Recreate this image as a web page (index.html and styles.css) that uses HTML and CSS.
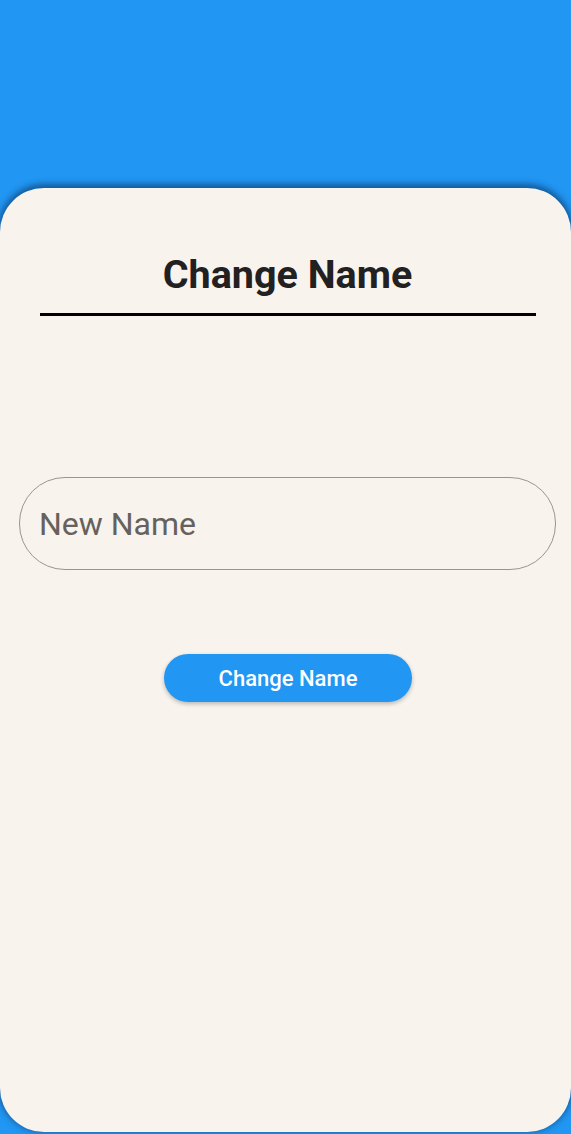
FILE: index.html
```html
<!DOCTYPE html>
<html lang="en">
<head>
<meta charset="utf-8">
<title>Change Name</title>
<link rel="stylesheet" href="styles.css">
</head>
<body>
<div class="screen">
  <main class="card">
    <h1 class="title">Change Name</h1>
    <div class="rule"></div>
    <input class="name-input" type="text" placeholder="New Name">
    <button class="submit" type="button">Change Name</button>
  </main>
</div>
</body>
</html>
```
FILE: styles.css
```css
html, body {
  margin: 0;
  padding: 0;
}
body {
  background: #2196f3;
  font-family: Roboto, "Noto Sans", "Liberation Sans", sans-serif;
  width: 571px;
  height: 1134px;
  overflow: hidden;
}
.screen {
  padding-top: 188px;
  height: 1134px;
  box-sizing: border-box;
}
.card {
  height: 944px;
  background: #f8f3ed;
  border-radius: 44px;
  box-shadow: 0 -2px 6px 2px rgba(10, 40, 80, 0.55);
  display: flex;
  flex-direction: column;
  padding-top: 64px;
  box-sizing: border-box;
}
.title {
  margin: 0;
  font-size: 39.5px;
  line-height: 46px;
  font-weight: 700;
  color: #222020;
  text-align: center;
  padding-left: 4px;
}
.rule {
  margin: 15px 0 0 40px;
  width: 496px;
  height: 3px;
  background: #000;
}
.name-input {
  margin: 161px 0 0 19px;
  width: 537px;
  height: 93px;
  box-sizing: border-box;
  border: 1.5px solid #9c958f;
  border-radius: 46px;
  background: transparent;
  padding: 0 0 0 19px;
  font-family: Roboto, "Noto Sans", sans-serif;
  font-size: 32px;
  color: #333;
  outline: none;
}
.name-input::placeholder {
  color: #66615c;
}
.submit {
  margin: 84px 0 0 164px;
  width: 248px;
  height: 48px;
  border: none;
  border-radius: 24px;
  background: #2196f3;
  color: #fff;
  font-family: Roboto, "Noto Sans", sans-serif;
  font-size: 22px;
  font-weight: 500;
  padding: 0;
  box-shadow: 0 2px 4px rgba(0, 0, 0, 0.25);
  cursor: pointer;
}
```
